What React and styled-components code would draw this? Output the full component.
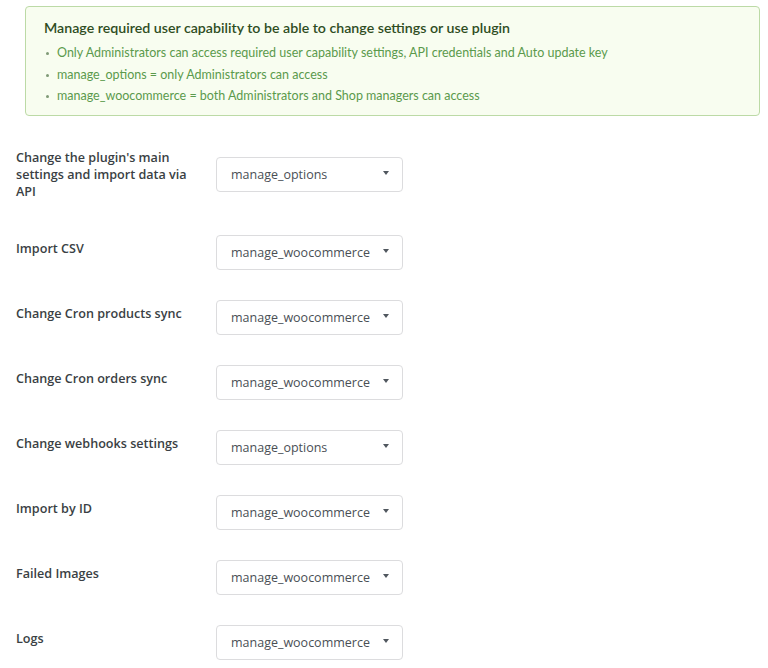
import React from 'react';
import styled, { createGlobalStyle } from 'styled-components';

const GlobalStyle = createGlobalStyle`
  body {
    margin: 0;
    background: #ffffff;
    font-family: "Open Sans", "Noto Sans", sans-serif;
  }
`

const Page = styled.div`
  padding: 6px 8px 0 16px;
`

const Notice = styled.div`
  margin-left: 9px;
  padding: 11px 18px 8px;
  background: #f8fdf0;
  border: 1px solid #bcdaa6;
  border-radius: 4px;
  font-family: Lato, "Open Sans", sans-serif;
`

const NoticeTitle = styled.h3`
  margin: 0 0 4px;
  font-size: 14.2px;
  font-weight: 600;
  line-height: 20px;
  color: #2f4d1f;
`

const NoticeList = styled.ul`
  margin: 0;
  padding: 0;
  list-style: none;
`

const NoticeItem = styled.li`
  position: relative;
  padding-left: 13px;
  font-size: 12.5px;
  line-height: 21.5px;
  color: #5b9a4c;

  &::before {
    content: '';
    position: absolute;
    left: 2px;
    top: 10px;
    width: 3px;
    height: 3px;
    border-radius: 50%;
    background: #7f9a76;
  }
`

const SettingsTable = styled.div`
  margin-top: 13px;
`

const Row = styled.div`
  display: grid;
  grid-template-columns: 200px 187px;
`

const Label = styled.div`
  padding: 20px 10px 20px 0;
  font-size: 12.6px;
  font-weight: 600;
  line-height: 17px;
  color: #3a3f44;
`

const Field = styled.div`
  padding: 15px 0;
  align-self: center;
`

const Select = styled.div`
  display: flex;
  align-items: center;
  justify-content: space-between;
  height: 35px;
  box-sizing: border-box;
  padding: 0 13px 0 14px;
  border: 1px solid #dcdcde;
  border-radius: 4px;
  background: #ffffff;
  font-size: 12.5px;
  color: #4a4f55;
`

const Caret = styled.span`
  width: 0;
  height: 0;
  border-left: 3.5px solid transparent;
  border-right: 3.5px solid transparent;
  border-top: 4px solid #50575e;
  margin-top: -3px;
`

const notes = [
  'Only Administrators can access required user capability settings, API credentials and Auto update key',
  'manage_options = only Administrators can access',
  'manage_woocommerce = both Administrators and Shop managers can access',
];

const settings = [
  { label: "Change the plugin's main settings and import data via API", value: 'manage_options' },
  { label: 'Import CSV', value: 'manage_woocommerce' },
  { label: 'Change Cron products sync', value: 'manage_woocommerce' },
  { label: 'Change Cron orders sync', value: 'manage_woocommerce' },
  { label: 'Change webhooks settings', value: 'manage_options' },
  { label: 'Import by ID', value: 'manage_woocommerce' },
  { label: 'Failed Images', value: 'manage_woocommerce' },
  { label: 'Logs', value: 'manage_woocommerce' },
];

function App() {
  return (
    <Page>
      <GlobalStyle />

      <Notice>
        <NoticeTitle>Manage required user capability to be able to change settings or use plugin</NoticeTitle>
        <NoticeList>
          {notes.map((note) => (
            <NoticeItem key={note}>{note}</NoticeItem>
          ))}
        </NoticeList>
      </Notice>

      <SettingsTable>
        {settings.map((item) => (
          <Row key={item.label}>
            <Label>{item.label}</Label>
            <Field>
              <Select>
                <span>{item.value}</span>
                <Caret />
              </Select>
            </Field>
          </Row>
        ))}
      </SettingsTable>
    </Page>
  );
}

export default App;
